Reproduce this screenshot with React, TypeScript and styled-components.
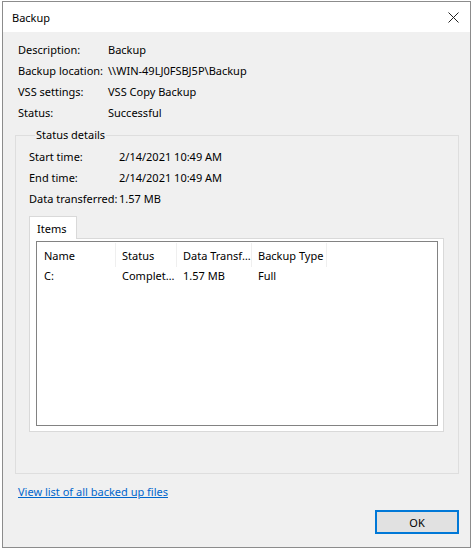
import React from "react";
import styled, { createGlobalStyle } from "styled-components";

const Global = createGlobalStyle`
  html, body { margin: 0; padding: 0; background: #ffffff; }
  body { font-family: "Noto Sans", "Open Sans", sans-serif; font-size: 11px; color: #000; }
  * { box-sizing: border-box; }
`;

const Window = styled.div`
  margin: 1px 0 0 2px;
  width: 469px;
  height: 547px;
  border: 1px solid #8c8c8c;
  background: #f0f0f0;
  display: flex;
  flex-direction: column;
`;

const TitleBar = styled.div`
  height: 30px;
  background: #ffffff;
  display: flex;
  align-items: center;
  justify-content: space-between;
  padding: 0 10px 0 9px;
`;

const CloseButton = styled.div`
  width: 12px;
  height: 12px;
  display: flex;
  align-items: center;
  justify-content: center;
  margin-right: 1px;
`;

const Body = styled.div`
  flex: 1;
  display: flex;
  flex-direction: column;
  padding: 7px 11px 0 12px;
`;

const InfoGrid = styled.div<{ $labelWidth: number; $indent: number }>`
  display: grid;
  grid-template-columns: ${(p) => p.$labelWidth}px auto;
  grid-auto-rows: 21px;
  align-items: center;
  padding-left: ${(p) => p.$indent}px;
  line-height: 16px;
  white-space: nowrap;
`;

const Group = styled.fieldset`
  margin: 4px 0 0 0;
  padding: 3px 15px 0 13px;
  border: 1px solid #dedede;
  height: 347px;
  min-width: 0;
  display: flex;
  flex-direction: column;
`;

const Legend = styled.legend`
  padding: 0 1px;
  margin-left: 6px;
  line-height: 16px;
`;

const Tabs = styled.div`
  margin-top: 7px;
  display: flex;
  flex-direction: column;
`;

const TabStrip = styled.div`
  display: flex;
`;

const Tab = styled.div`
  width: 48px;
  height: 23px;
  background: #ffffff;
  border: 1px solid #d9d9d9;
  border-bottom: none;
  padding-left: 7px;
  display: flex;
  align-items: center;
  margin-bottom: -1px;
  position: relative;
  z-index: 1;
`;

const TabPanel = styled.div`
  width: 415px;
  height: 194px;
  background: #ffffff;
  border: 1px solid #d9d9d9;
  padding: 2px 5px 5px 6px;
`;

const ListView = styled.div`
  width: 100%;
  height: 100%;
  border: 1px solid #828282;
  background: #ffffff;
  display: flex;
  flex-direction: column;
`;

const ListRow = styled.div<{ $header?: boolean }>`
  display: grid;
  grid-template-columns: 79px 61px 75px 75px 1fr;
  height: ${(p) => (p.$header ? 24 : 16)}px;
  align-items: center;
  margin-top: ${(p) => (p.$header ? 1 : 0)}px;
`;

const Cell = styled.div<{ $header?: boolean }>`
  height: 100%;
  display: flex;
  align-items: center;
  padding-left: 6px;
  white-space: nowrap;
  overflow: hidden;
  border-right: ${(p) => (p.$header ? "1px solid #efefef" : "none")};
  &:first-child { padding-left: 7px; }
  &:last-child { border-right: none; }
`;

const LinkRow = styled.div`
  margin-top: 9px;
  padding-left: 3px;
  height: 16px;
  display: flex;
  align-items: center;
`;

const Link = styled.a`
  color: #0066cc;
  text-decoration: underline;
  cursor: pointer;
`;

const Footer = styled.div`
  display: flex;
  justify-content: flex-end;
  margin-top: 11px;
`;

const Button = styled.button`
  width: 84px;
  height: 24px;
  background: #e1e1e1;
  border: 2px solid #0078d7;
  font-family: inherit;
  font-size: 11px;
  color: #000;
  padding: 0;
`;

const topRows: [string, string][] = [
  ["Description:", "Backup"],
  ["Backup location:", "\\\\WIN-49LJ0FSBJ5P\\Backup"],
  ["VSS settings:", "VSS Copy Backup"],
  ["Status:", "Successful"],
];

const statusRows: [string, string][] = [
  ["Start time:", "2/14/2021 10:49 AM"],
  ["End time:", "2/14/2021 10:49 AM"],
  ["Data transferred:", "1.57 MB"],
];

const headers = ["Name", "Status", "Data Transf…", "Backup Type", ""];
const items = [["C:", "Complet…", "1.57 MB", "Full", ""]];

export default function App() {
  return (
    <>
      <Global />
      <Window>
        <TitleBar>
          <span>Backup</span>
          <CloseButton>
            <svg width="11" height="11" viewBox="0 0 11 11">
              <path d="M0.5 0.5 L10.5 10.5 M10.5 0.5 L0.5 10.5" stroke="#222" strokeWidth="1" fill="none" />
            </svg>
          </CloseButton>
        </TitleBar>
        <Body>
          <InfoGrid $labelWidth={90} $indent={3}>
            {topRows.map(([l, v]) => (
              <React.Fragment key={l}>
                <span>{l}</span>
                <span>{v}</span>
              </React.Fragment>
            ))}
          </InfoGrid>
          <Group>
            <Legend>Status details</Legend>
            <InfoGrid $labelWidth={90} $indent={0}>
              {statusRows.map(([l, v]) => (
                <React.Fragment key={l}>
                  <span>{l}</span>
                  <span>{v}</span>
                </React.Fragment>
              ))}
            </InfoGrid>
            <Tabs>
              <TabStrip>
                <Tab>Items</Tab>
              </TabStrip>
              <TabPanel>
                <ListView>
                  <ListRow $header>
                    {headers.map((h, i) => (
                      <Cell $header key={i}>{h}</Cell>
                    ))}
                  </ListRow>
                  {items.map((r, ri) => (
                    <ListRow key={ri}>
                      {r.map((c, ci) => (
                        <Cell key={ci}>{c}</Cell>
                      ))}
                    </ListRow>
                  ))}
                </ListView>
              </TabPanel>
            </Tabs>
          </Group>
          <LinkRow>
            <Link>View list of all backed up files</Link>
          </LinkRow>
          <Footer>
            <Button>OK</Button>
          </Footer>
        </Body>
      </Window>
    </>
  );
}
